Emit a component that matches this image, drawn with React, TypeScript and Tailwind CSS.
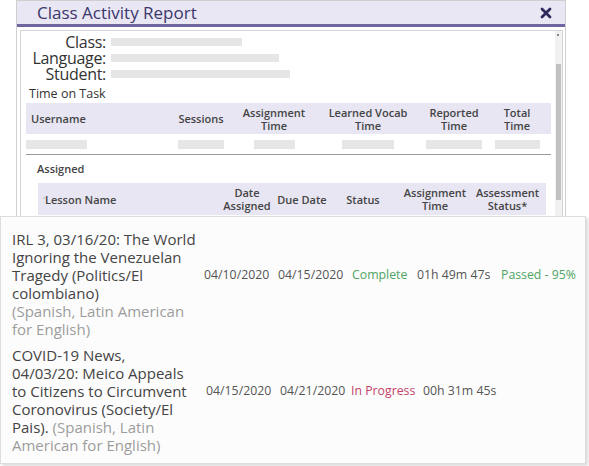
import React from "react";

const font = { fontFamily: '"Open Sans", "Noto Sans", sans-serif' };

function Bar({ w }: { w: string }) {
  return <div className={`h-[9px] bg-[#e6e6e6] ${w}`} />;
}

function InfoRow({ label, barClass }: { label: string; barClass: string }) {
  return (
    <div className="flex items-center h-[16px]">
      <div className="w-[80px] text-right text-[16px] leading-[16px] text-[#333] tracking-[-0.3px]">{label}</div>
      <div className={`ml-[5px] h-[8px] bg-[#e6e6e6] ${barClass}`} />
    </div>
  );
}

function ActivityRow({
  cols,
  lines,
  assigned,
  due,
  status,
  statusClass,
  time,
  assessment,
}: {
  cols: string;
  lines: React.ReactNode;
  assigned: string;
  due: string;
  status: string;
  statusClass: string;
  time: string;
  assessment?: string;
}) {
  return (
    <div className={`grid items-center ${cols}`}>
      <div className="text-[15px] leading-[18px] text-[#444] whitespace-nowrap">{lines}</div>
      <div className="mb-[18px] text-[12.3px] text-[#555]">{assigned}</div>
      <div className="mb-[18px] text-[12.3px] text-[#555]">{due}</div>
      <div className={`mb-[18px] text-[12.3px] ${statusClass}`}>{status}</div>
      <div className="mb-[18px] text-[12.3px] text-[#555]">{time}</div>
      <div className="mb-[18px] text-[12.3px] text-[#4fa463]">{assessment}</div>
    </div>
  );
}

const grey = "text-[#9c9c9c]";

export default function App() {
  return (
    <div className="relative w-[589px] h-[466px] bg-white overflow-hidden" style={font}>
      {/* dialog */}
      <div className="ml-[16px] w-[550px] h-[460px] border border-[#cfcfcf] flex flex-col">
        <div className="h-[23px] bg-[#e9e7f3] flex items-center justify-between pl-[20px] pr-[13px]">
          <span className="text-[17px] leading-none text-[#3b366b]">Class Activity Report</span>
          <svg width="12" height="12" viewBox="0 0 12 12">
            <path d="M2 2 L10 10 M10 2 L2 10" stroke="#2e2a5e" strokeWidth="2.8" strokeLinecap="round" />
          </svg>
        </div>
        <div className="h-[3px] bg-[#6e66a0]" />
        <div className="flex-1 p-[3px] pr-[2px]">
          <div className="h-full border border-[#d4d4d4] flex">
            <div className="flex-1 pl-[5px] pr-[4px] pt-[3px]">
              <InfoRow label="Class:" barClass="w-[131px]" />
              <InfoRow label="Language:" barClass="w-[168px]" />
              <InfoRow label="Student:" barClass="w-[179px]" />
              <div className="mt-[3px] pl-[3px] text-[12.5px] leading-[18px] text-[#333]">Time on Task</div>
              <div className="grid grid-cols-[145px_60px_86px_102px_70px_56px] bg-[#e8e6f3] h-[31px] items-center text-[11px] leading-[13px] font-semibold text-[#444]">
                <div className="pl-[5px]">Username</div>
                <div className="text-center">Sessions</div>
                <div className="text-center">Assignment<br />Time</div>
                <div className="text-center">Learned Vocab<br />Time</div>
                <div className="text-center">Reported<br />Time</div>
                <div className="text-center">Total<br />Time</div>
              </div>
              <div className="grid grid-cols-[145px_60px_86px_102px_70px_56px] h-[21px] items-center border-b border-[#9a9a9a]">
                <div><Bar w="w-[61px]" /></div>
                <div className="flex justify-center"><Bar w="w-[46px]" /></div>
                <div className="flex justify-center"><Bar w="w-[41px]" /></div>
                <div className="flex justify-center"><Bar w="w-[52px]" /></div>
                <div className="flex justify-center"><Bar w="w-[56px]" /></div>
                <div className="flex justify-center"><Bar w="w-[45px]" /></div>
              </div>
              <div className="pl-[11px] h-[28px] flex items-center text-[11px] font-semibold text-[#444]">Assigned</div>
              <div className="ml-[12px] w-[508px] grid grid-cols-[183px_52px_58px_64px_80px_65px] bg-[#e8e6f3] h-[32px] items-center text-[11px] leading-[13px] font-semibold text-[#444]">
                <div className="pl-[5px]"><span className="text-[#aaa] text-[8px] align-top">'</span>Lesson Name</div>
                <div className="text-center">Date<br />Assigned</div>
                <div className="text-center">Due Date</div>
                <div className="text-center">Status</div>
                <div className="text-center">Assignment<br />Time</div>
                <div className="text-center">Assessment<br />Status*</div>
              </div>
            </div>
            <div className="w-[7px] bg-[#f1f1f1] relative">
              <div className="absolute left-[2px] top-[3px] w-[2px] h-[2px] bg-[#888]" />
              <div className="absolute left-[1px] top-[33px] w-[5px] h-[136px] bg-[#c1c1c1]" />
            </div>
          </div>
        </div>
      </div>

      {/* zoomed overlay card */}
      <div className="absolute left-0 top-[216px] w-[586px] h-[248px] bg-[#fcfcfc] border border-[#dcdcdc] shadow-[2px_2px_3px_rgba(0,0,0,0.15)] pl-[11px] pt-[13px] flex flex-col gap-[8px]">
        <ActivityRow
          cols="grid-cols-[192px_74px_74px_65px_84px_1fr]"
          lines={
            <>
              <div>IRL 3, 03/16/20: The World</div>
              <div>Ignoring the Venezuelan</div>
              <div>Tragedy (Politics/El</div>
              <div>colombiano)</div>
              <div className={grey}>(Spanish, Latin American</div>
              <div className={grey}>for English)</div>
            </>
          }
          assigned="04/10/2020"
          due="04/15/2020"
          status="Complete"
          statusClass="text-[#4fa463]"
          time="01h 49m 47s"
          assessment="Passed - 95%"
        />
        <ActivityRow
          cols="grid-cols-[194px_74px_71px_72px_1fr_0px]"
          lines={
            <>
              <div>COVID-19 News,</div>
              <div>04/03/20: Meico Appeals</div>
              <div>to Citizens to Circumvent</div>
              <div>Coronovirus (Society/El</div>
              <div>
                Pais). <span className={grey}>(Spanish, Latin</span>
              </div>
              <div className={grey}>American for English)</div>
            </>
          }
          assigned="04/15/2020"
          due="04/21/2020"
          status="In Progress"
          statusClass="text-[#c2446a]"
          time="00h 31m 45s"
        />
      </div>
    </div>
  );
}
